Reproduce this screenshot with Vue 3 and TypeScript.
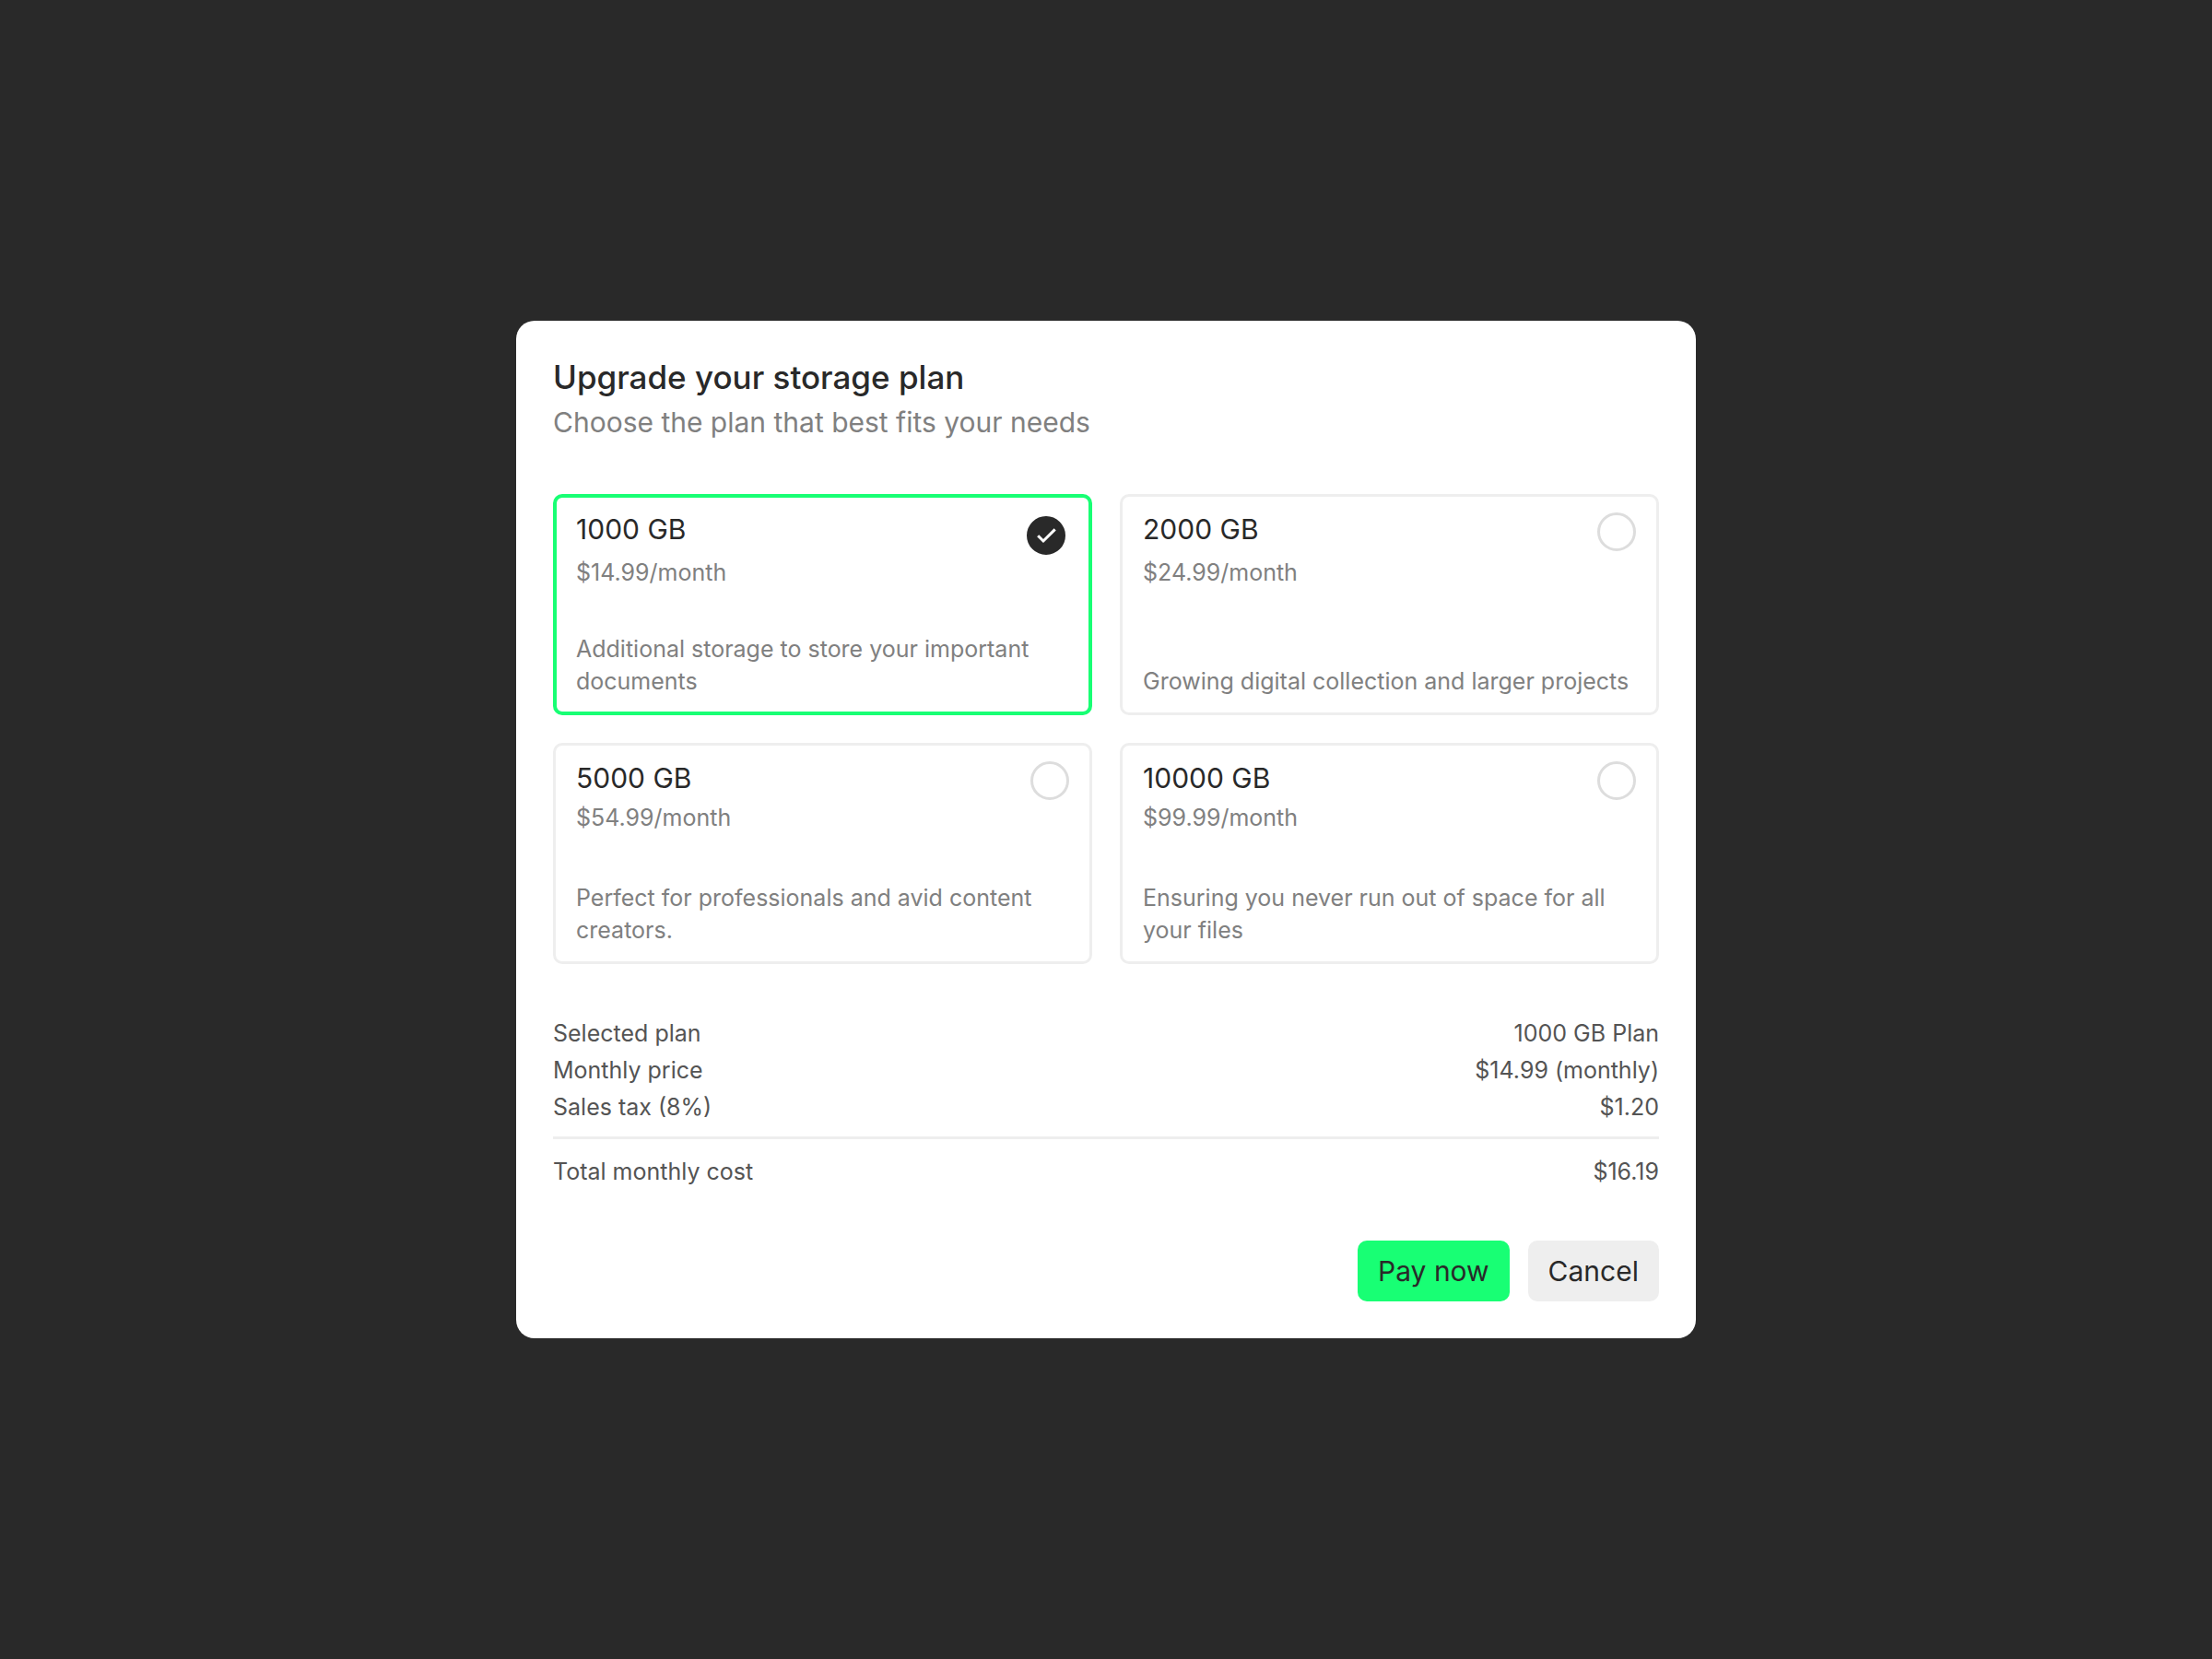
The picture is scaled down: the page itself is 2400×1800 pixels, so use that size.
<script setup lang="ts">
import { computed, ref } from 'vue'

interface Plan {
  size: number
  price: number
  description: string
}

const planRows: Plan[][] = [
  [
    { size: 1000, price: 14.99, description: 'Additional storage to store your important documents' },
    { size: 2000, price: 24.99, description: 'Growing digital collection and larger projects' },
  ],
  [
    { size: 5000, price: 54.99, description: 'Perfect for professionals and avid content creators.' },
    { size: 10000, price: 99.99, description: 'Ensuring you never run out of space for all your files' },
  ],
]

const TAX_RATE = 0.08

const selectedSize = ref<number>(1000)
const selectedPlan = computed<Plan>(
  () => planRows.flat().find((plan) => plan.size === selectedSize.value) ?? planRows[0][0],
)
const tax = computed(() => selectedPlan.value.price * TAX_RATE)
const total = computed(() => selectedPlan.value.price + tax.value)

const money = (amount: number): string => `$${amount.toFixed(2)}`
</script>

<template>
  <main class="backdrop">
    <form class="dialog" role="dialog" aria-labelledby="dialog-title" @submit.prevent>
      <header class="heading">
        <h1 id="dialog-title" class="title">Upgrade your storage plan</h1>
        <p class="subtitle">Choose the plan that best fits your needs</p>
      </header>

      <div class="plans" role="radiogroup" aria-labelledby="dialog-title">
        <div v-for="(row, index) in planRows" :key="index" class="plan-row">
          <label
            v-for="plan in row"
            :key="plan.size"
            class="plan"
            :class="{ 'plan-selected': plan.size === selectedSize }"
          >
            <span class="plan-head">
              <span class="plan-name">{{ plan.size }} GB</span>
              <span class="choice">
                <input v-model="selectedSize" class="choice-input" type="radio" name="plan" :value="plan.size" />
                <svg v-if="plan.size === selectedSize" class="choice-check" viewBox="0 0 42 42" aria-hidden="true">
                  <path d="M12.2 21.2 18 27 30.7 14.4" fill="none" stroke="#fff" stroke-width="3" />
                </svg>
              </span>
            </span>
            <span class="plan-price">{{ money(plan.price) }}/month</span>
            <span class="plan-description">{{ plan.description }}</span>
          </label>
        </div>
      </div>

      <dl class="summary">
        <div class="line">
          <dt>Selected plan</dt>
          <dd>{{ selectedPlan.size }} GB Plan</dd>
        </div>
        <div class="line">
          <dt>Monthly price</dt>
          <dd>{{ money(selectedPlan.price) }} (monthly)</dd>
        </div>
        <div class="line">
          <dt>Sales tax (8%)</dt>
          <dd>{{ money(tax) }}</dd>
        </div>
        <div class="line line-total">
          <dt>Total monthly cost</dt>
          <dd>{{ money(total) }}</dd>
        </div>
      </dl>

      <footer class="actions">
        <button class="button button-primary" type="submit">Pay now</button>
        <button class="button" type="button">Cancel</button>
      </footer>
    </form>
  </main>
</template>

<style>
body {
  margin: 0;
  background: #292929;
}
</style>

<style scoped>
.backdrop {
  display: flex;
  align-items: center;
  justify-content: center;
  box-sizing: border-box;
  min-height: 100vh;
  padding: 40px;
  background: #292929;
  color: #292929;
  font-family: Inter, 'Liberation Sans', sans-serif;
}

.dialog {
  display: flex;
  flex-direction: column;
  gap: 60px;
  box-sizing: border-box;
  width: 100%;
  max-width: 1280px;
  padding: 40px;
  border-radius: 20px;
  background: #fff;
}

.heading {
  display: flex;
  flex-direction: column;
  gap: 10px;
}

.title {
  margin: 0;
  font-size: 35px;
  font-weight: 500;
  line-height: 42px;
}

.subtitle {
  margin: 0;
  color: #808080;
  font-size: 30px;
  line-height: 36px;
}

.plans {
  display: flex;
  flex-direction: column;
  gap: 30px;
}

/* Cards in a row share their tracks, so prices line up across the row. */
.plan-row {
  display: grid;
  grid-template-columns: 1fr 1fr;
  grid-template-rows: auto auto 1fr;
  column-gap: 30px;
  row-gap: 4px;
  min-height: 240px;
}

.plan {
  display: grid;
  grid-row: span 3;
  grid-template-rows: subgrid;
  box-sizing: border-box;
  padding: 17px 22px 16px;
  border: 3px solid #eee;
  border-radius: 10px;
  cursor: pointer;
}

.plan-selected {
  padding: 16px 21px 15px;
  border: 4px solid #18ff74;
}

.plan-head {
  display: flex;
  align-items: flex-start;
  justify-content: space-between;
}

.plan-name {
  font-size: 30px;
  line-height: 36px;
}

.choice {
  display: grid;
}

.plan-selected .choice {
  margin: 4px 4px 0 0;
}

.choice-input,
.choice-check {
  grid-area: 1 / 1;
  width: 42px;
  height: 42px;
}

.choice-input {
  appearance: none;
  box-sizing: border-box;
  margin: 0;
  border: 3px solid #ddd;
  border-radius: 50%;
  cursor: pointer;
}

.choice-input:checked {
  border-color: #292929;
  background: #292929;
}

.choice-check {
  pointer-events: none;
}

.plan-price {
  color: #808080;
  font-size: 25px;
  line-height: 30px;
}

.plan-description {
  align-self: end;
  color: #808080;
  font-size: 25px;
  line-height: 35px;
}

.summary {
  display: flex;
  flex-direction: column;
  gap: 10px;
  margin: 0;
  color: #545454;
  font-size: 25px;
  line-height: 30px;
}

.line {
  display: flex;
  justify-content: space-between;
}

.line dd {
  margin: 0;
}

.line-total {
  margin-top: 7px;
  padding-top: 20px;
  border-top: 3px solid #eee;
}

.actions {
  display: flex;
  justify-content: flex-end;
  gap: 20px;
}

.button {
  padding: 15px 22px;
  border: 0;
  border-radius: 10px;
  background: #eee;
  color: #292929;
  font: inherit;
  font-size: 30px;
  line-height: 36px;
  cursor: pointer;
}

.button-primary {
  background: #18ff74;
}
</style>
